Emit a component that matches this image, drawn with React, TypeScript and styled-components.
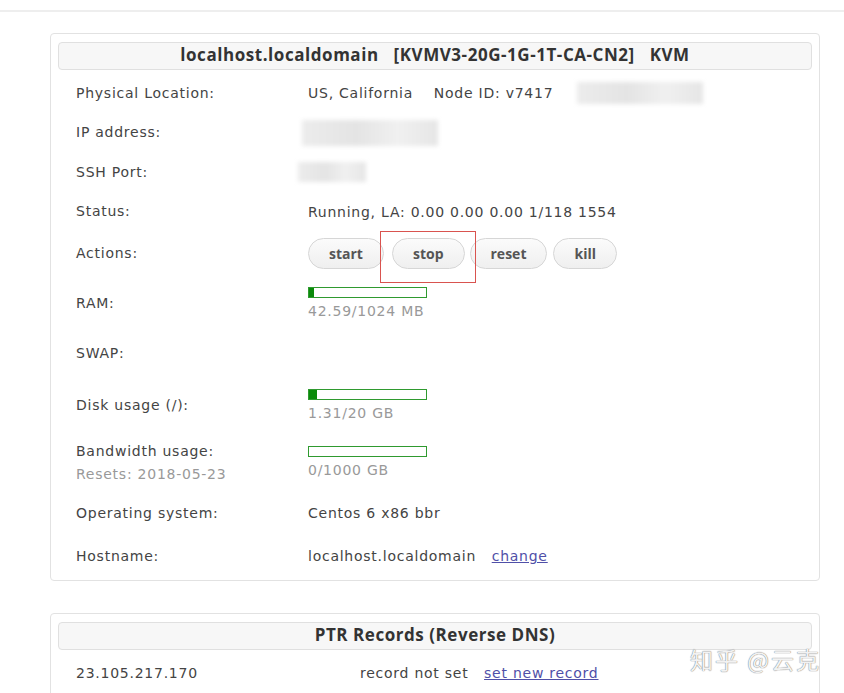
import styled, { createGlobalStyle } from "styled-components";

const GlobalStyle = createGlobalStyle`
  html, body {
    margin: 0;
    padding: 0;
    background: #fff;
  }
  body {
    font-family: "DejaVu Sans", Verdana, sans-serif;
    font-size: 14px;
    letter-spacing: 0.75px;
    color: #444;
  }
`;

interface Row {
  label: string;
  sub?: string;
  height: number;
  value: React.ReactNode;
}

const Bar = ({ pct, text }: { pct: number; text: string }) => (
  <Usage>
    <Track>
      <Fill style={{ width: `${pct}%` }} />
    </Track>
    <UsageText>{text}</UsageText>
  </Usage>
);

const getRows = (): Row[] => [
  {
    label: "Physical Location:",
    height: 40,
    value: (
      <>
        US, California&nbsp;&nbsp;&nbsp; Node ID: v7417
        <Smudge $w={126} $h={22} $ml={24} />
      </>
    ),
  },
  { label: "IP address:", height: 39, value: <Smudge $w={136} $h={26} $ml={-6} /> },
  { label: "SSH Port:", height: 40, value: <Smudge $w={68} $h={20} $ml={-10} /> },
  {
    label: "Status:",
    height: 39,
    value: "Running, LA: 0.00 0.00 0.00 1/118 1554",
  },
  {
    label: "Actions:",
    height: 44,
    value: (
      <Buttons>
        <Btn>start</Btn>
        <Btn $ml={8}>stop</Btn>
        <Btn $ml={5}>reset</Btn>
        <Btn $ml={6}>kill</Btn>
        <Marker />
      </Buttons>
    ),
  },
  { label: "RAM:", height: 56, value: <Bar pct={4} text="42.59/1024 MB" /> },
  { label: "SWAP:", height: 44, value: null },
  { label: "Disk usage (/):", height: 60, value: <Bar pct={7} text="1.31/20 GB" /> },
  {
    label: "Bandwidth usage:",
    sub: "Resets: 2018-05-23",
    height: 55,
    value: <Bar pct={0} text="0/1000 GB" />,
  },
  { label: "Operating system:", height: 46, value: "Centos 6 x86 bbr" },
  {
    label: "Hostname:",
    height: 40,
    value: (
      <>
        localhost.localdomain&nbsp;&nbsp; <Link href="#">change</Link>
      </>
    ),
  },
];

export default function App() {
  const rows = getRows();
  return (
    <>
      <GlobalStyle />
      <TopLine />
      <Page>
        <Card>
          <Header>
            localhost.localdomain&nbsp;&nbsp; [KVMV3-20G-1G-1T-CA-CN2]&nbsp;&nbsp; KVM
          </Header>
          <Rows>
            {rows.map((r) => (
              <InfoRow key={r.label} $h={r.height}>
                <Label>
                  {r.label}
                  {r.sub && <Sub>{r.sub}</Sub>}
                </Label>
                <Value>{r.value}</Value>
              </InfoRow>
            ))}
          </Rows>
        </Card>

        <Card $top={32}>
          <Header>PTR Records (Reverse DNS)</Header>
          <PtrRow>
            <PtrIp>23.105.217.170</PtrIp>
            <span>
              record not set&nbsp;&nbsp; <Link href="#">set new record</Link>
            </span>
          </PtrRow>
          <Watermark>知乎 @云克</Watermark>
        </Card>
      </Page>
    </>
  );
}

const TopLine = styled.div`
  height: 10px;
  border-bottom: 2px solid #eee;
`;
const Page = styled.div`
  padding: 21px 24px 0 50px;
`;
const Card = styled.div<{ $top?: number }>`
  position: relative;
  margin-top: ${(p) => p.$top || 0}px;
  border: 1px solid #e2e2e2;
  border-radius: 4px;
  padding: 8px 7px 4px 7px;
`;
const Header = styled.div`
  height: 26px;
  line-height: 24px;
  background: #f7f7f7;
  border: 1px solid #e0e0e0;
  border-radius: 4px;
  text-align: center;
  font-family: "Open Sans", sans-serif;
  font-weight: 700;
  font-size: 17px;
  letter-spacing: 0.55px;
  color: #333;
  white-space: pre;
`;
const Rows = styled.div`
  padding-top: 3px;
`;
const InfoRow = styled.div<{ $h: number }>`
  display: grid;
  grid-template-columns: 232px 1fr;
  align-items: center;
  height: ${(p) => p.$h}px;
  padding-left: 18px;
`;
const Label = styled.div`
  line-height: 23px;
`;
const Sub = styled.div`
  color: #999;
`;
const Value = styled.div`
  display: flex;
  align-items: center;
  white-space: pre;
`;
const Smudge = styled.span<{ $w: number; $h: number; $ml: number }>`
  display: inline-block;
  width: ${(p) => p.$w}px;
  height: ${(p) => p.$h}px;
  margin-left: ${(p) => p.$ml}px;
  background: linear-gradient(90deg, #ececec, #e4e4e4 40%, #f0f0f0 70%, #e6e6e6);
  filter: blur(2px);
`;
const Buttons = styled.div`
  position: relative;
  display: flex;
`;
const Btn = styled.button<{ $ml?: number }>`
  height: 31px;
  margin: 0 0 0 ${(p) => p.$ml || 0}px;
  padding: 0 20px;
  border: 1px solid #d6d6d6;
  border-radius: 16px;
  background: linear-gradient(#fbfbfb, #efefef);
  font-family: "Open Sans", sans-serif;
  font-weight: 700;
  font-size: 14px;
  letter-spacing: 0;
  color: #555;
`;
const Marker = styled.div`
  position: absolute;
  left: 72px;
  top: -7px;
  width: 94px;
  height: 50px;
  border: 1px solid #d9534f;
  pointer-events: none;
`;
const Usage = styled.div`
  display: flex;
  flex-direction: column;
  gap: 4px;
`;
const Track = styled.div`
  width: 117px;
  height: 9px;
  border: 1px solid #2f9a2f;
`;
const Fill = styled.div`
  height: 100%;
  background: #0a8a0a;
`;
const UsageText = styled.div`
  color: #999;
  line-height: 18px;
`;
const Link = styled.a`
  color: #5050a8;
  text-decoration: underline;
`;
const PtrRow = styled.div`
  display: flex;
  align-items: center;
  height: 46px;
  padding-left: 18px;
`;
const PtrIp = styled.div`
  width: 284px;
`;
const Watermark = styled.div`
  position: absolute;
  right: -2px;
  top: 28px;
  font-family: "Noto Sans CJK SC", sans-serif;
  font-size: 23px;
  letter-spacing: 2px;
  color: rgba(255, 255, 255, 0.92);
  text-shadow: 0 0 1px #777, 0 0 1px #999;
`;
